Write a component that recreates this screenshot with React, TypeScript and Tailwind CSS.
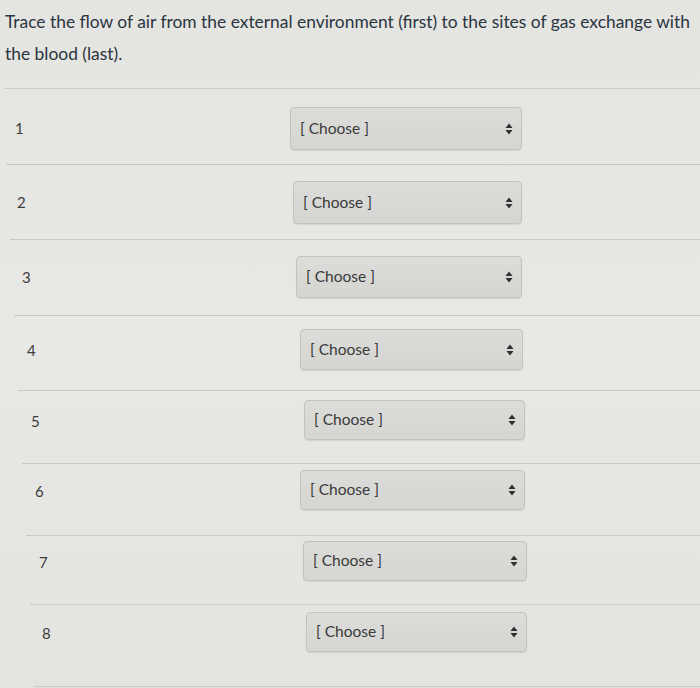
const rows = [
  { n: 1, row: "h-[75px] pt-[18px]", num: "w-[290px] pl-[15px]", sel: "w-[232px] h-[43px]", line: "ml-[6px]" },
  { n: 2, row: "h-[74px] pt-[16px]", num: "w-[293px] pl-[17px]", sel: "w-[229px] h-[43px]", line: "ml-[10px]" },
  { n: 3, row: "h-[75px] pt-[16px]", num: "w-[296px] pl-[22px]", sel: "w-[226px] h-[42px]", line: "ml-[14px]" },
  { n: 4, row: "h-[74px] pt-[13px]", num: "w-[300px] pl-[27px]", sel: "w-[223px] h-[41px]", line: "ml-[18px]" },
  { n: 5, row: "h-[72px] pt-[9px]", num: "w-[304px] pl-[31px]", sel: "w-[221px] h-[40px]", line: "ml-[22px]" },
  { n: 6, row: "h-[71px] pt-[6px]", num: "w-[300px] pl-[35px]", sel: "w-[225px] h-[40px]", line: "ml-[26px]" },
  { n: 7, row: "h-[68px] pt-[5px]", num: "w-[303px] pl-[39px]", sel: "w-[224px] h-[40px]", line: "ml-[30px]" },
  { n: 8, row: "h-[81px] pt-[7px]", num: "w-[306px] pl-[42px]", sel: "w-[221px] h-[40px]", line: "ml-[34px]" },
];

function Arrows() {
  return (
    <svg width="8" height="12" viewBox="0 0 8 12" className="shrink-0">
      <path d="M4 0.5 L7.5 5 L0.5 5 Z" fill="#2f2f2f" />
      <path d="M4 11.5 L7.5 7 L0.5 7 Z" fill="#2f2f2f" />
    </svg>
  );
}

export default function App() {
  return (
    <div
      className="w-[700px] h-[688px] overflow-hidden bg-gradient-to-b from-[#e4e4e1] via-[#e8e8e5] to-[#e3e3e0] text-[#2d3b45]"
      style={{ fontFamily: "Lato, 'Open Sans', sans-serif" }}
    >
      <div className="pl-[5px] pt-[6px] text-[17.4px] leading-[32px] text-[#2a3540]">
        Trace the flow of air from the external environment (first) to the sites of gas exchange with
        <br />
        the blood (last).
      </div>
      <div className="mt-[18px] ml-[5px] h-px bg-[#c9c9c6]" />
      {rows.map((r) => (
        <div key={r.n}>
          <div className={`flex items-start ${r.row}`}>
            <div className={`${r.num} shrink-0 flex items-center h-[42px] text-[15px] text-[#3d3d3d]`}>
              {r.n}
            </div>
            <div
              className={`${r.sel} flex items-center justify-between pl-[9px] pr-[8px] rounded-[4px] border border-[#c2c2bf] bg-gradient-to-b from-[#dcdcda] to-[#d5d5d2] shadow-[0_1px_1px_rgba(0,0,0,0.08)] text-[15.5px] text-[#3a3a3a]`}
            >
              <span>[ Choose ]</span>
              <Arrows />
            </div>
          </div>
          <div className={`${r.line} h-px bg-[#c9c9c6]`} />
        </div>
      ))}
    </div>
  );
}
